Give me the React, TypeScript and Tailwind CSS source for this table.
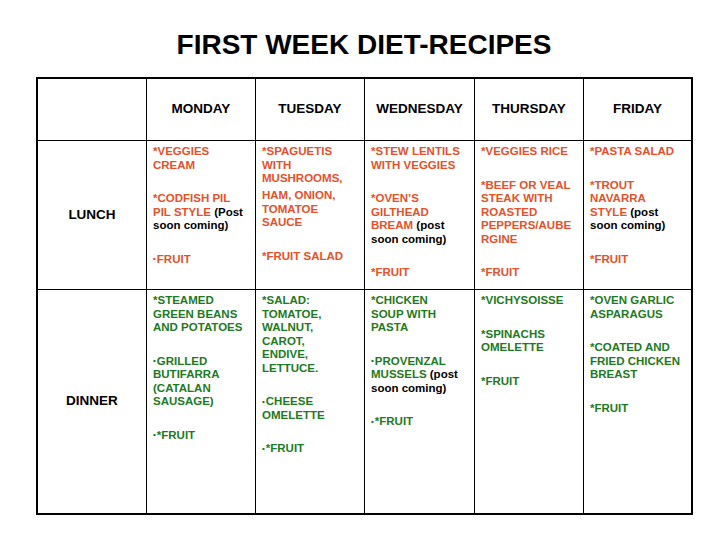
type Line = string | [string, string];
type Para = { lines: Line[]; tight?: boolean };
type Cell = Para[];

const days = ["MONDAY", "TUESDAY", "WEDNESDAY", "THURSDAY", "FRIDAY"];
const colWidths = ["w-[109px]", "w-[109px]", "w-[110px]", "w-[109px]", "w-[108px]"];

const lunch: Cell[] = [
  [
    { lines: ["*VEGGIES", "CREAM"] },
    { lines: ["*CODFISH PIL", ["PIL STYLE", " (Post"], ["", "soon coming)"]] },
    { lines: ["•FRUIT"] },
  ],
  [
    { lines: ["*SPAGUETIS", "WITH", "MUSHROOMS,"] },
    { lines: ["HAM, ONION,", "TOMATOE", "SAUCE"], tight: true },
    { lines: ["*FRUIT SALAD"] },
  ],
  [
    { lines: ["*STEW LENTILS", "WITH VEGGIES"] },
    { lines: ["*OVEN’S", "GILTHEAD", ["BREAM", " (post"], ["", "soon coming)"]] },
    { lines: ["*FRUIT"] },
  ],
  [
    { lines: ["*VEGGIES RICE"] },
    { lines: ["*BEEF OR VEAL", "STEAK WITH", "ROASTED", "PEPPERS/AUBE", "RGINE"] },
    { lines: ["*FRUIT"] },
  ],
  [
    { lines: ["*PASTA SALAD"] },
    { lines: ["*TROUT", "NAVARRA", ["STYLE", " (post"], ["", "soon coming)"]] },
    { lines: ["*FRUIT"] },
  ],
];

const dinner: Cell[] = [
  [
    { lines: ["*STEAMED", "GREEN BEANS", "AND POTATOES"] },
    { lines: ["•GRILLED", "BUTIFARRA", "(CATALAN", "SAUSAGE)"] },
    { lines: ["•*FRUIT"] },
  ],
  [
    { lines: ["*SALAD:", "TOMATOE,", "WALNUT,", "CAROT,", "ENDIVE,", "LETTUCE."] },
    { lines: ["•CHEESE", "OMELETTE"] },
    { lines: ["•*FRUIT"] },
  ],
  [
    { lines: ["*CHICKEN", "SOUP WITH", "PASTA"] },
    { lines: ["•PROVENZAL", ["MUSSELS", " (post"], ["", "soon coming)"]] },
    { lines: ["•*FRUIT"] },
  ],
  [
    { lines: ["*VICHYSOISSE"] },
    { lines: ["*SPINACHS", "OMELETTE"] },
    { lines: ["*FRUIT"] },
  ],
  [
    { lines: ["*OVEN GARLIC", "ASPARAGUS"] },
    { lines: ["*COATED AND", "FRIED CHICKEN", "BREAST"] },
    { lines: ["*FRUIT"] },
  ],
];

// small square-ish bullet like the slide's "•"
function Text({ s }: { s: string }) {
  if (!s.startsWith("•")) return <>{s}</>;
  return (
    <>
      <span className="relative -top-[1.5px] mr-[1px] text-[8px] leading-none">•</span>
      {s.slice(1)}
    </>
  );
}

function MealCell({ cell, color, width }: { cell: Cell; color: string; width: string }) {
  return (
    <div className={`${width} border-l border-black pl-[6px] pt-[4px] text-[11.5px] leading-[13.5px] font-bold whitespace-nowrap`}>
      {cell.map((p, i) => (
        <div key={i} className={i === 0 ? "" : p.tight ? "mt-[3.5px]" : "mt-[20px]"}>
          {p.lines.map((l, j) =>
            typeof l === "string" ? (
              <div key={j} className={color}>
                <Text s={l} />
              </div>
            ) : (
              <div key={j}>
                <span className={color}>{l[0]}</span>
                <span className="text-black">{l[1]}</span>
              </div>
            )
          )}
        </div>
      ))}
    </div>
  );
}

export default function App() {
  return (
    <div className="w-[728px] h-[546px] bg-white font-['Liberation_Sans',Arial,sans-serif] text-black">
      <h1 className="pt-[29px] text-center text-[28px] leading-[32px] font-bold">FIRST WEEK DIET-RECIPES</h1>

      <div className="mt-[16px] ml-[36px] w-[657px] border-2 border-black">
        <div className="flex h-[61px] text-[13.5px] font-bold">
          <div className="w-[108px]" />
          {days.map((d, i) => (
            <div key={d} className={`${colWidths[i]} flex items-center justify-center border-l border-black`}>
              {d}
            </div>
          ))}
        </div>

        <div className="flex h-[149px] border-t border-black">
          <div className="w-[108px] flex items-center justify-center text-[13.5px] font-bold">LUNCH</div>
          {lunch.map((c, i) => (
            <MealCell key={i} cell={c} color="text-[#e8502a]" width={colWidths[i]} />
          ))}
        </div>

        <div className="flex h-[224px] border-t border-black">
          <div className="w-[108px] flex items-center justify-center text-[13.5px] font-bold">DINNER</div>
          {dinner.map((c, i) => (
            <MealCell key={i} cell={c} color="text-[#1e7a22]" width={colWidths[i]} />
          ))}
        </div>
      </div>
    </div>
  );
}
